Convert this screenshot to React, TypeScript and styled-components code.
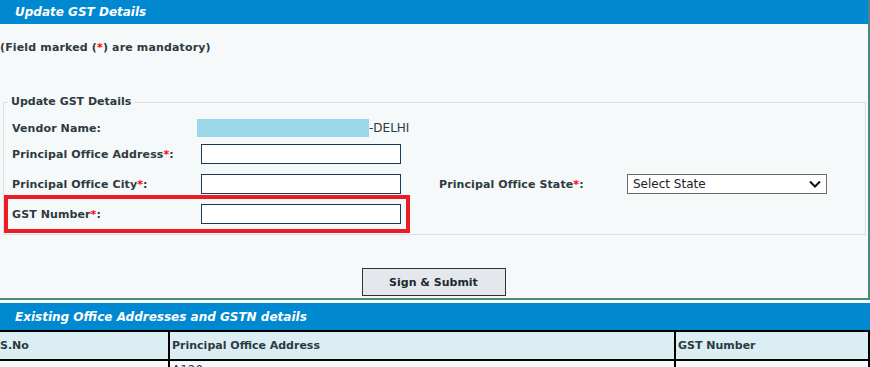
import React from "react";
import styled, { createGlobalStyle } from "styled-components";

const Global = createGlobalStyle`
  html, body { margin: 0; padding: 0; background: #f5f9f9; }
  body { font-family: "DejaVu Sans", Verdana, sans-serif; color: #2e3a40; }
  * { box-sizing: border-box; }
`;

const Page = styled.div`
  width: 870px;
  height: 367px;
  overflow: hidden;
  background: #f5f9f9;
`;

const Panel = styled.div`
  width: 870px;
  background: #f5f9f9;
  border-right: 2px solid #4e877f;
  border-bottom: 2px solid #4e877f;
  padding-bottom: 2px;
`;

const SectionHeader = styled.div<{ $h: number }>`
  height: ${(p) => p.$h}px;
  background: #0089d1;
  color: #ffffff;
  font-size: 12px;
  font-weight: bold;
  font-style: italic;
  display: flex;
  align-items: center;
  padding-left: 15px;
`;

const Note = styled.div`
  font-size: 11px;
  font-weight: bold;
  line-height: 14px;
  margin-top: 17px;
  letter-spacing: 0.15px;
`;

const Star = styled.span`
  color: #ff0000;
`;

const Fieldset = styled.fieldset`
  margin: 40px 2px 0 3px;
  padding: 0 0 5px 0;
  border: 1px solid #dcdfdf;
  min-width: 0;
`;

const Legend = styled.legend`
  font-size: 11px;
  font-weight: bold;
  line-height: 14px;
  margin-left: 4px;
  padding: 0 3px;
`;

const Row = styled.div<{ $h: number; $top?: number }>`
  display: flex;
  align-items: center;
  height: ${(p) => p.$h}px;
  margin-top: ${(p) => p.$top ?? 0}px;
  padding-left: 8px;
`;

const Highlight = styled.div`
  display: flex;
  align-items: center;
  height: 30px;
  margin-left: 4px;
  padding-left: 4px;
  width: 398px;
  outline: 4px solid #ec1c24;
`;

const Label = styled.label<{ $w: number }>`
  width: ${(p) => p.$w}px;
  flex: none;
  font-size: 11px;
  font-weight: bold;
  white-space: nowrap;
  letter-spacing: 0.1px;
`;

const Redacted = styled.span`
  display: inline-block;
  width: 172px;
  height: 18px;
  background: #9bd8eb;
  margin-left: -4px;
  vertical-align: middle;
`;

const Value = styled.span`
  font-size: 12px;
  display: flex;
  align-items: center;
`;

const TextInput = styled.input`
  width: 200px;
  height: 20px;
  border: 1px solid #1b3a5a;
  background: #ffffff;
  margin: 0;
  padding: 0 3px;
  font-family: inherit;
  font-size: 12px;
  flex: none;
`;

const Select = styled.div`
  width: 200px;
  height: 20px;
  border: 1px solid #6b6b6b;
  background: #ffffff;
  display: flex;
  align-items: center;
  justify-content: space-between;
  padding: 0 5px 0 5px;
  font-size: 12px;
  color: #222;
  flex: none;
`;

const Spacer = styled.div<{ $w: number }>`
  width: ${(p) => p.$w}px;
  flex: none;
`;

const ButtonRow = styled.div`
  display: flex;
  justify-content: center;
  margin-top: 33px;
`;

const Button = styled.button`
  width: 144px;
  height: 28px;
  margin-left: -1px;
  border: 1px solid #333;
  background: #e4e8ec;
  font-family: inherit;
  font-size: 11px;
  font-weight: bold;
  color: #1e2a30;
  padding: 0;
`;

const Gap = styled.div`
  height: 3px;
`;

const Table = styled.div`
  width: 870px;
  display: grid;
  grid-template-columns: 168px 506px 196px;
`;

const HeadCell = styled.div<{ $first?: boolean; $last?: boolean }>`
  height: 31px;
  background: #dbeef4;
  border-top: 2px solid #000;
  border-bottom: 2px solid #000;
  border-left: ${(p) => (p.$first ? "none" : "2px solid #000")};
  border-right: ${(p) => (p.$last ? "2px solid #000" : "none")};
  font-size: 11px;
  font-weight: bold;
  display: flex;
  align-items: center;
  padding-left: ${(p) => (p.$first ? 0 : 2)}px;
  color: #2e3a40;
`;

const BodyCell = styled.div<{ $first?: boolean; $last?: boolean }>`
  height: 30px;
  background: #f5f9f9;
  border-left: ${(p) => (p.$first ? "none" : "2px solid #000")};
  border-right: ${(p) => (p.$last ? "2px solid #000" : "none")};
  font-size: 12px;
  padding: 2px 0 0 2px;
  line-height: 14px;
  color: #2e3a40;
`;

const Chevron = () => (
  <svg width="12" height="8" viewBox="0 0 12 8">
    <path d="M1 1.5 L6 6.5 L11 1.5" fill="none" stroke="#111" strokeWidth="2" />
  </svg>
);

export default function App() {
  return (
    <Page>
      <Global />
      <Panel>
        <SectionHeader $h={24}>Update GST Details</SectionHeader>
        <Note>
          (Field marked (<Star>*</Star>) are mandatory)
        </Note>
        <Fieldset>
          <Legend>Update GST Details</Legend>
          <Row $h={22} $top={8}>
            <Label $w={189}>Vendor Name:</Label>
            <Value>
              <Redacted />
              -DELHI
            </Value>
          </Row>
          <Row $h={30}>
            <Label $w={189}>
              Principal Office Address<Star>*</Star>:
            </Label>
            <TextInput />
          </Row>
          <Row $h={30}>
            <Label $w={189}>
              Principal Office City<Star>*</Star>:
            </Label>
            <TextInput />
            <Spacer $w={38} />
            <Label $w={188}>
              Principal Office State<Star>*</Star>:
            </Label>
            <Select>
              <span>Select State</span>
              <Chevron />
            </Select>
          </Row>
          <Highlight>
            <Label $w={189}>
              GST Number<Star>*</Star>:
            </Label>
            <TextInput />
          </Highlight>
        </Fieldset>
        <ButtonRow>
          <Button>Sign &amp; Submit</Button>
        </ButtonRow>
      </Panel>
      <Gap />
      <SectionHeader $h={27}>Existing Office Addresses and GSTN details</SectionHeader>
      <Table>
        <HeadCell $first>S.No</HeadCell>
        <HeadCell>Principal Office Address</HeadCell>
        <HeadCell $last>GST Number</HeadCell>
        <BodyCell $first />
        <BodyCell>A120</BodyCell>
        <BodyCell $last />
      </Table>
    </Page>
  );
}
